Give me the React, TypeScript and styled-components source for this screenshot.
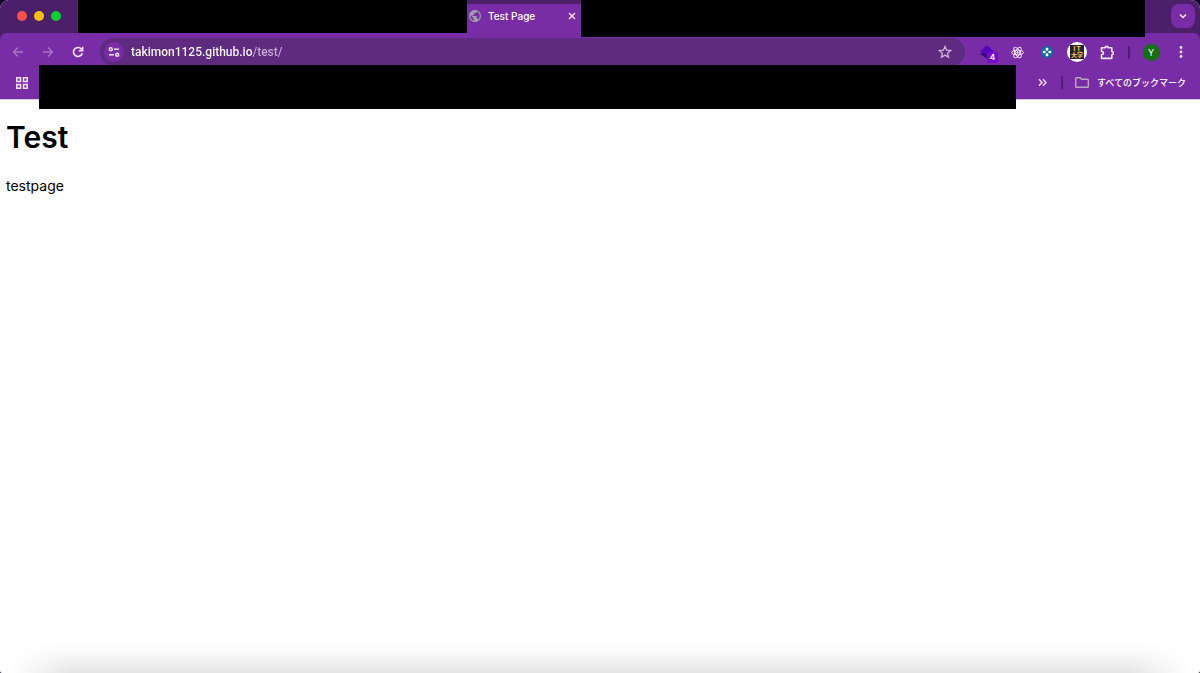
import React from "react";
import styled, { createGlobalStyle } from "styled-components";

const colors = {
  frame: "#4c1f6b",
  bar: "#782ca6",
  field: "#5f2b80",
  divider: "#521c75",
  icon: "#f1e6f8",
  faded: "#a678c4",
};

const GlobalStyle = createGlobalStyle`
  * { box-sizing: border-box; }
  html { background: #16042b; }
  body {
    margin: 0;
    font-family: Inter, "Noto Sans CJK JP", sans-serif;
  }
`;

const Window = styled.div`
  display: flex;
  flex-direction: column;
  min-height: 100vh;
  border-radius: 9px 9px 2px 2px;
  overflow: hidden;
  background: #fff;
`;

const TabStrip = styled.header`
  display: flex;
  align-items: flex-start;
  height: 33px;
  background: ${colors.frame};
`;

const WindowControls = styled.div`
  display: flex;
  flex: none;
  gap: 7px;
  width: 78px;
  padding: 11px 0 0 17px;
`;

const ControlDot = styled.button<{ $color: string }>`
  width: 10px;
  height: 10px;
  padding: 0;
  border: 0;
  border-radius: 50%;
  background: ${(p) => p.$color};
`;

const Redaction = styled.div<{ $grow: number; $height: number }>`
  position: relative;
  z-index: 1;
  flex: ${(p) => p.$grow} 1 0;
  height: ${(p) => p.$height}px;
  background: #000;
`;

const Tab = styled.div`
  display: flex;
  flex: none;
  align-items: center;
  width: 114px;
  height: 29px;
  margin-top: 4px;
  padding: 0 2px 6px 2px;
  background: ${colors.bar};
  color: #fff;
`;

const TabTitle = styled.span`
  flex: 1;
  margin-left: 7px;
  font-size: 10px;
  line-height: 14px;
  font-weight: 500;
  white-space: nowrap;
`;

const TabStripEnd = styled.div`
  display: flex;
  flex: none;
  justify-content: flex-end;
  width: 55px;
  padding: 4px 5px 0 0;
`;

const IconButton = styled.button<{ $size?: number; $color?: string }>`
  display: flex;
  flex: none;
  align-items: center;
  justify-content: center;
  width: ${(p) => p.$size ?? 30}px;
  height: ${(p) => p.$size ?? 28}px;
  padding: 0;
  border: 0;
  background: transparent;
  color: ${(p) => p.$color ?? colors.icon};
  font-family: inherit;
`;

const TabSearch = styled(IconButton)`
  border-radius: 8px;
  background: ${colors.bar};
`;

const ToolbarBack = styled.div`
  background: ${colors.frame};
`;

const Toolbar = styled.nav`
  display: flex;
  align-items: center;
  height: 33px;
  padding: 5px 4px 0 3px;
  border-radius: 7px 7px 0 0;
  background: ${colors.bar};
`;

const AddressBar = styled.form`
  display: flex;
  flex: 1;
  align-items: center;
  min-width: 0;
  height: 28px;
  margin: 0 7px;
  padding: 0 10px 0 4px;
  border-radius: 14px;
  background: ${colors.field};
`;

const SiteInfo = styled(IconButton)`
  border-radius: 50%;
  background: ${colors.bar};
`;

const AddressInput = styled.input`
  flex: 1;
  min-width: 0;
  height: 20px;
  margin-left: 7px;
  padding: 0;
  border: 0;
  outline: 0;
  background: linear-gradient(90deg, #fff 121px, #c6aed6 121px);
  background-clip: text;
  -webkit-background-clip: text;
  color: transparent;
  font-family: Roboto, sans-serif;
  font-size: 12px;
  line-height: 20px;
  font-weight: 500;
`;

const Divider = styled.span<{ $space: number }>`
  flex: none;
  width: 2px;
  height: 13px;
  margin: 0 ${(p) => p.$space}px;
  background: ${colors.divider};
`;

const Avatar = styled.span`
  width: 17px;
  height: 17px;
  border-radius: 50%;
  background: #14700f;
  color: #fff;
  font-size: 9px;
  line-height: 17px;
  text-align: center;
`;

const Extension = styled(IconButton)`
  position: relative;
`;

const Badge = styled.span`
  position: absolute;
  right: 4px;
  bottom: 3px;
  width: 11px;
  height: 11px;
  border-radius: 3px;
  background: #7a06d0;
  color: #fff;
  font-size: 8px;
  line-height: 11px;
  font-weight: 700;
  text-align: center;
`;

const SchoolLogo = styled.span`
  display: flex;
  align-items: center;
  justify-content: center;
  width: 20px;
  height: 20px;
  border-radius: 50%;
  background: #fff;
`;

const SchoolMark = styled.span`
  width: 14px;
  height: 14px;
  background: #20252b;
  color: #e9b368;
  font-size: 6px;
  line-height: 6px;
  padding-top: 1px;
  font-weight: 900;
  text-align: center;
  white-space: nowrap;
`;

const BookmarkBar = styled.nav`
  display: flex;
  align-items: flex-start;
  height: 34px;
  border-bottom: 1px solid #dcc9ea;
  background: ${colors.bar};
`;

const AppsSlot = styled.div`
  display: flex;
  flex: none;
  justify-content: center;
  width: 39px;
  padding: 3px 0 0 4px;
`;

const BookmarkRedaction = styled(Redaction)`
  margin-top: -1px;
`;

const BookmarkEnd = styled.div`
  display: flex;
  flex: none;
  align-items: center;
  width: 184px;
  height: 33px;
  padding-left: 11px;
`;

const FolderButton = styled.button`
  display: flex;
  align-items: center;
  gap: 8px;
  padding: 0;
  border: 0;
  background: transparent;
  color: #fff;
  font-family: inherit;
  font-size: 9px;
  line-height: 14px;
  font-weight: 500;
  white-space: nowrap;
`;

const Page = styled.main`
  flex: 1;
  padding: 18px 6px;
  color: #000;
`;

const PageTitle = styled.h1`
  margin: 0;
  font-size: 30px;
  line-height: 38px;
  font-weight: 600;
`;

const PageText = styled.p`
  margin: 20px 0 0;
  font-size: 14px;
  line-height: 20px;
`;

const BottomShade = styled.div`
  height: 30px;
  background: linear-gradient(to bottom, rgba(0, 0, 0, 0), rgba(0, 0, 0, 0.03) 40%, rgba(0, 0, 0, 0.1));
  mask-image: linear-gradient(90deg, transparent 10px, #000 70px, #000 calc(100% - 70px), transparent calc(100% - 10px));
`;

const Svg = ({
  size,
  box = 24,
  width = 2,
  children,
}: {
  size: number;
  box?: number;
  width?: number;
  children: React.ReactNode;
}) => (
  <svg
    width={size}
    height={size}
    viewBox={`0 0 ${box} ${box}`}
    fill="none"
    stroke="currentColor"
    strokeWidth={width}
    aria-hidden="true"
  >
    {children}
  </svg>
);

const Globe = () => (
  <svg width="12" height="12" viewBox="2 2 20 20" aria-hidden="true">
    <path
      fill="#9aa0a6"
      d="M12 2C6.480 2 2 6.480 2 12s4.480 10 10 10 10-4.480 10-10S17.520 2 12 2zm-1 17.930c-3.950-.49-7-3.850-7-7.930 0-.62.08-1.210.21-1.790L9 15v1c0 1.100.9 2 2 2v1.930zm6.900-2.540c-.26-.81-1-1.390-1.900-1.390h-1v-3c0-.55-.45-1-1-1H8v-2h2c.55 0 1-.45 1-1V7h2c1.100 0 2-.9 2-2v-.41c2.930 1.190 5 4.060 5 7.410 0 2.080-.8 3.970-2.100 5.390z"
    />
  </svg>
);

export default function App() {
  return (
    <>
      <GlobalStyle />
      <Window>
        <TabStrip>
          <WindowControls>
            <ControlDot $color="#ff4f4b" aria-label="Close" />
            <ControlDot $color="#ffbd09" aria-label="Minimize" />
            <ControlDot $color="#0bcf32" aria-label="Zoom" />
          </WindowControls>
          <Redaction $grow={389} $height={33} />
          <Tab>
            <Globe />
            <TabTitle>Test Page</TabTitle>
            <IconButton $size={14} aria-label="Close tab">
              <Svg size={8} box={8} width={1.4}>
                <path d="M1 1l6 6M7 1L1 7" />
              </Svg>
            </IconButton>
          </Tab>
          <Redaction $grow={564} $height={37} />
          <TabStripEnd>
            <TabSearch $size={24} aria-label="Search tabs">
              <Svg size={8} box={8} width={1.5}>
                <path d="M1 2.500l3 3 3-3" />
              </Svg>
            </TabSearch>
          </TabStripEnd>
        </TabStrip>

        <ToolbarBack>
          <Toolbar>
            <IconButton $color={colors.faded} aria-label="Back">
              <Svg size={12} box={12} width={1.3}>
                <path d="M11 6H1.500M6 1.500L1.500 6 6 10.500" />
              </Svg>
            </IconButton>
            <IconButton $color={colors.faded} aria-label="Forward">
              <Svg size={12} box={12} width={1.3}>
                <path d="M1 6h9.500M6 1.500L10.500 6 6 10.500" />
              </Svg>
            </IconButton>
            <IconButton aria-label="Reload">
              <Svg size={12} box={12} width={1.6}>
                <path d="M10.300 7.200A4.500 4.500 0 1 1 9.300 2.900L10.300 4" />
                <path d="M10.600 0.800v3.900H6.800" />
              </Svg>
            </IconButton>
            <AddressBar onSubmit={(e) => e.preventDefault()}>
              <SiteInfo $size={20} type="button" aria-label="Site information">
                <Svg size={12} box={12} width={1.4}>
                  <circle cx="2.800" cy="3.200" r="1.500" />
                  <path d="M6 3.200h5M1 8.800h5" />
                  <circle cx="9.200" cy="8.800" r="1.500" />
                </Svg>
              </SiteInfo>
              <AddressInput
                aria-label="Address"
                defaultValue="takimon1125.github.io/test/"
                spellCheck={false}
              />
              <IconButton $size={20} $color="#cdb8dc" type="button" aria-label="Bookmark this page">
                <Svg size={14} width={2.2}>
                  <path d="M12 2.500l2.800 6.400 6.900.6-5.200 4.600 1.500 6.800-6-3.600-6 3.600 1.500-6.800-5.200-4.600 6.900-.6z" />
                </Svg>
              </IconButton>
            </AddressBar>
            <Extension aria-label="Layers extension, 4">
              <svg width="14" height="14" viewBox="0 0 14 14" aria-hidden="true">
                <path d="M0 9l3-2h8l3 2-7 4.500z" fill="#31077f" />
                <path d="M7 0.500l3.500 2.300v1L14 6 7 10.200 0 6l3.500-2.200v-1z" fill="#5606b8" />
              </svg>
              <Badge>4</Badge>
            </Extension>
            <IconButton aria-label="React extension">
              <Svg size={13} width={1.8}>
                <ellipse cx="12" cy="12" rx="11" ry="4.300" />
                <ellipse cx="12" cy="12" rx="11" ry="4.300" transform="rotate(60 12 12)" />
                <ellipse cx="12" cy="12" rx="11" ry="4.300" transform="rotate(120 12 12)" />
                <circle cx="12" cy="12" r="1.500" fill="currentColor" />
              </Svg>
            </IconButton>
            <IconButton aria-label="Navigator extension">
              <svg width="12" height="12" viewBox="0 0 12 12" aria-hidden="true">
                <circle cx="6" cy="6" r="6" fill="#086b98" />
                <path
                  fill="#fff"
                  d="M4.700 1.800h2.600v2L6 5.200 4.700 3.800zM4.700 10.200h2.600v-2L6 6.800 4.700 8.200zM1.800 4.700v2.600h2L5.200 6 3.800 4.700zM10.200 4.700v2.600h-2L6.800 6l1.400-1.300z"
                />
              </svg>
            </IconButton>
            <IconButton aria-label="IT大学">
              <SchoolLogo>
                <SchoolMark>
                  I T
                  <br />
                  大学
                </SchoolMark>
              </SchoolLogo>
            </IconButton>
            <IconButton aria-label="Extensions">
              <Svg size={15} box={15} width={1.6}>
                <path
                  strokeLinejoin="round"
                  d="M1.500 2.800h3.700a1.500 1.400 0 0 1 3 0h3.600v3.800a1.500 1.600 0 0 1 0 3.200v3.600H1.500v-3.600q2-.2 2-1.700t-2-1.700z"
                />
              </Svg>
            </IconButton>
            <Divider $space={6} />
            <IconButton aria-label="Profile">
              <Avatar>Y</Avatar>
            </IconButton>
            <IconButton aria-label="Menu">
              <svg width="4" height="12" viewBox="0 0 4 12" fill="currentColor" aria-hidden="true">
                <circle cx="2" cy="1.500" r="1.400" />
                <circle cx="2" cy="6" r="1.400" />
                <circle cx="2" cy="10.500" r="1.400" />
              </svg>
            </IconButton>
          </Toolbar>
        </ToolbarBack>

        <BookmarkBar>
          <AppsSlot>
            <IconButton aria-label="Apps">
              <Svg size={12} box={12} width={1.5}>
                <path d="M.8.8h3.700v3.700H.8zM7.500.8h3.700v3.700H7.500zM.8 7.500h3.700v3.700H.8zM7.500 7.500h3.700v3.700H7.500z" />
              </Svg>
            </IconButton>
          </AppsSlot>
          <BookmarkRedaction $grow={1} $height={44} />
          <BookmarkEnd>
            <IconButton aria-label="More bookmarks">
              <Svg size={9} box={9} width={1.4}>
                <path d="M1 1.300l3 3.200-3 3.200M5 1.300l3 3.200-3 3.200" />
              </Svg>
            </IconButton>
            <Divider $space={4} />
            <FolderButton>
              <svg width="22" height="11" viewBox="-8 0 22 11" fill="none" aria-hidden="true">
                <path
                  d="M1.500.7h3.700l1.300 1.500h6q.8 0 .8.8v6.500q0 .8-.8.8h-11q-.8 0-.8-.8v-8q0-.8.8-.8z"
                  stroke="#b8a9bb"
                  strokeWidth="1.400"
                />
              </svg>
              すべてのブックマーク
            </FolderButton>
          </BookmarkEnd>
        </BookmarkBar>

        <Page>
          <PageTitle>Test</PageTitle>
          <PageText>testpage</PageText>
        </Page>
        <BottomShade />
      </Window>
    </>
  );
}
